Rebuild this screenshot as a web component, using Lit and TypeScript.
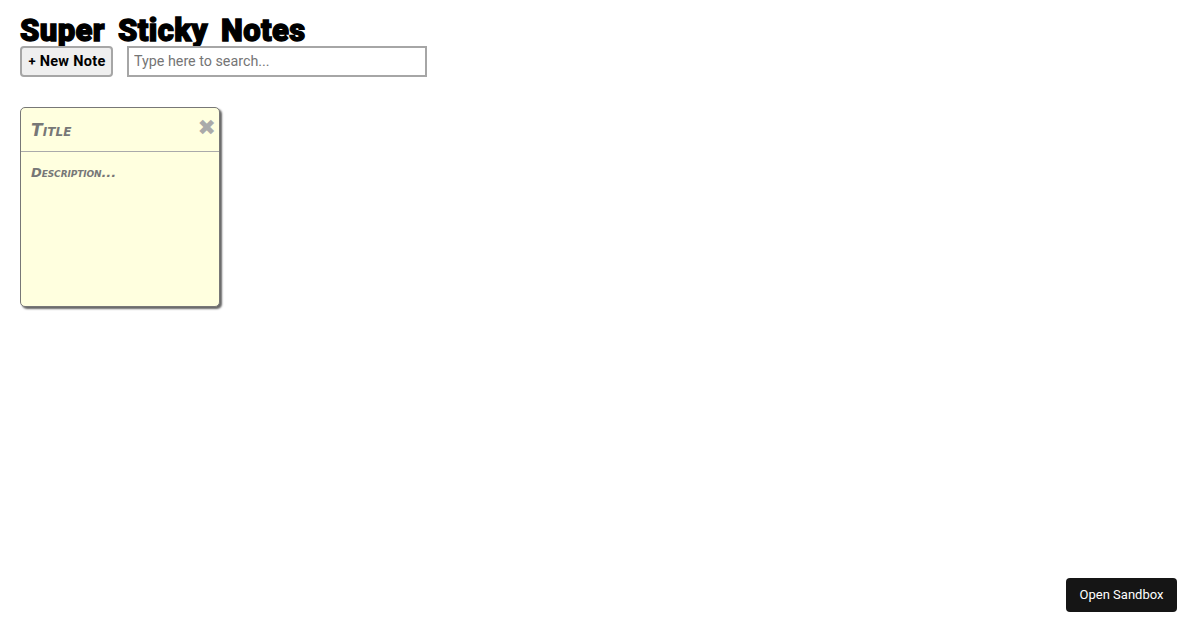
import { LitElement, html, css } from "lit";
import { customElement } from "lit/decorators.js";

@customElement("app-root")
export class AppRoot extends LitElement {
  static styles = css`
    :host { display: block; height: 630px; box-sizing: border-box; padding: 16px 20px 0; position: relative; background: #fff; font-family: "Liberation Sans", Arial, sans-serif; }
    h1 { margin: 0; font: 900 31px/30px "Roboto", sans-serif; color: #000; -webkit-text-stroke: 1.3px #000; word-spacing: 5px; letter-spacing: 0.38px; height: 30px; white-space: nowrap; }
    .bar { display: flex; align-items: stretch; gap: 14px; height: 31px; }
    button.new { box-sizing: border-box; width: 93px; padding: 0 0 0 1px; background: #efefef; border: 2px solid #a6a6a6; border-radius: 4px; font: 700 14.5px "Roboto", sans-serif; letter-spacing: 0.3px; color: #000; }
    button.new small { font-size: 13px; }
    input { box-sizing: border-box; width: 300px; border: 2px solid #a6a6a6; padding: 0 5px 1px; font: 14.3px "Roboto", sans-serif; outline: none; background: #fff; }
    input::placeholder { color: #757575; opacity: 1; }
    .notes { margin-top: 30px; display: flex; }
    .note { box-sizing: border-box; width: 200px; height: 200px; background: #ffffdf; border: 1px solid #777; border-radius: 5px; box-shadow: 2px 2px 2px #666; display: flex; flex-direction: column; }
    .head { height: 44px; box-sizing: border-box; border-bottom: 1px solid #aaa; display: flex; justify-content: space-between; padding: 0 3px 0 10px; }
    .hw { font-family: "DejaVu Sans", sans-serif; font-style: oblique; font-variant: small-caps; color: #777; font-weight: 700; }
    .title { font-size: 17px; line-height: 44px; letter-spacing: 0.1px; }
    .x { font: 700 22px/40px "DejaVu Sans", sans-serif; color: #aaa; }
    .desc { padding: 12px 10px; font-size: 13px; line-height: 18px; letter-spacing: -0.1px; }
    .sandbox { position: absolute; right: 23px; bottom: 18px; width: 111px; height: 34px; padding-bottom: 2px; box-sizing: border-box; background: #151515; color: #fff; border-radius: 4px; display: flex; align-items: center; justify-content: center; font: 13px "Roboto", sans-serif; }
  `;
  render() {
    return html`
      <h1>Super Sticky Notes</h1>
      <div class="bar">
        <button class="new"><small>+</small> New Note</button>
        <input placeholder="Type here to search..." />
      </div>
      <div class="notes">
        <div class="note">
          <div class="head"><span class="hw title">Title</span><span class="x">✖</span></div>
          <div class="hw desc">Description...</div>
        </div>
      </div>
      <div class="sandbox">Open Sandbox</div>
    `;
  }
}
